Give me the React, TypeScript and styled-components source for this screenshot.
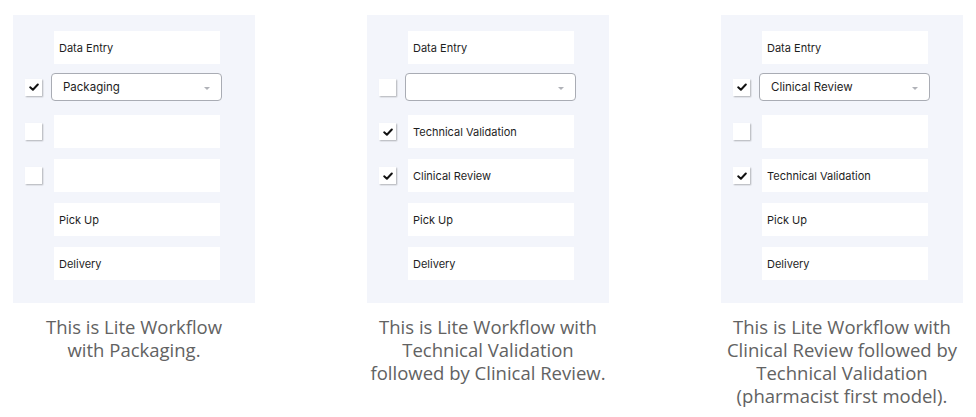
import React, { FC } from 'react';
import styled, { createGlobalStyle } from 'styled-components';

const GlobalStyle = createGlobalStyle`
  body {
    margin: 0;
    background: #ffffff;
  }
`;

type Step =
  | { kind: 'fixed'; label: string }
  | { kind: 'select'; label: string; checked: boolean }
  | { kind: 'option'; label: string; checked: boolean };

interface Workflow {
  steps: Step[];
  caption: string[];
}

const workflows: Workflow[] = [
  {
    steps: [
      { kind: 'fixed', label: 'Data Entry' },
      { kind: 'select', label: 'Packaging', checked: true },
      { kind: 'option', label: '', checked: false },
      { kind: 'option', label: '', checked: false },
      { kind: 'fixed', label: 'Pick Up' },
      { kind: 'fixed', label: 'Delivery' },
    ],
    caption: ['This is Lite Workflow', 'with Packaging.'],
  },
  {
    steps: [
      { kind: 'fixed', label: 'Data Entry' },
      { kind: 'select', label: '', checked: false },
      { kind: 'option', label: 'Technical Validation', checked: true },
      { kind: 'option', label: 'Clinical Review', checked: true },
      { kind: 'fixed', label: 'Pick Up' },
      { kind: 'fixed', label: 'Delivery' },
    ],
    caption: [
      'This is Lite Workflow with',
      'Technical Validation',
      'followed by Clinical Review.',
    ],
  },
  {
    steps: [
      { kind: 'fixed', label: 'Data Entry' },
      { kind: 'select', label: 'Clinical Review', checked: true },
      { kind: 'option', label: '', checked: false },
      { kind: 'option', label: 'Technical Validation', checked: true },
      { kind: 'fixed', label: 'Pick Up' },
      { kind: 'fixed', label: 'Delivery' },
    ],
    caption: [
      'This is Lite Workflow with',
      'Clinical Review followed by',
      'Technical Validation',
      '(pharmacist first model).',
    ],
  },
];

const CheckMark: FC = () => (
  <svg width="10" height="8" viewBox="0 0 10 8" aria-hidden>
    <path
      d="M1.2 4.3 L3.9 6.7 L8.8 1.5"
      fill="none"
      stroke="#111"
      strokeWidth="2"
      strokeLinecap="round"
      strokeLinejoin="round"
    />
  </svg>
);

const StepRow: FC<{ step: Step }> = ({ step }) => {
  if (step.kind === 'fixed') {
    return (
      <Row>
        <CheckSlot />
        <Field>{step.label}</Field>
      </Row>
    );
  }
  if (step.kind === 'select') {
    return (
      <Row $compact>
        <CheckSlot>
          <Checkbox>{step.checked && <CheckMark />}</Checkbox>
        </CheckSlot>
        <Select>
          <span>{step.label}</span>
          <Caret />
        </Select>
      </Row>
    );
  }
  return (
    <Row>
      <CheckSlot>
        <Checkbox>{step.checked && <CheckMark />}</Checkbox>
      </CheckSlot>
      <Field>{step.label}</Field>
    </Row>
  );
};

export default function App() {
  return (
    <>
      <GlobalStyle />
      <Page>
        {workflows.map((wf, i) => (
          <Column key={i}>
            <Panel>
              {wf.steps.map((step, j) => (
                <StepRow key={j} step={step} />
              ))}
            </Panel>
            <Caption>
              {wf.caption.map((line, k) => (
                <CaptionLine key={k}>{line}</CaptionLine>
              ))}
            </Caption>
          </Column>
        ))}
      </Page>
    </>
  );
}

const Page = styled.div`
  display: grid;
  grid-template-columns: repeat(3, 242px);
  column-gap: 112px;
  padding: 15px 0 0 13px;
`;

const Column = styled.div`
  display: flex;
  flex-direction: column;
  align-items: center;
`;

const Panel = styled.div`
  box-sizing: border-box;
  width: 100%;
  height: 288px;
  background: #f3f5fb;
  padding: 16px 0 0 12px;
  display: flex;
  flex-direction: column;
  gap: 11px;
`;

const Row = styled.div<{ $compact?: boolean }>`
  display: flex;
  align-items: center;
  gap: 12px;
  height: ${({ $compact }) => ($compact ? '28px' : '33px')};
  margin: ${({ $compact }) => ($compact ? '-2px 0 3px' : '0')};
`;

const CheckSlot = styled.div`
  width: 17px;
  flex: none;
  display: flex;
  justify-content: center;
`;

const Checkbox = styled.div`
  width: 17px;
  height: 17px;
  background: #ffffff;
  box-shadow: 1px 1px 1.5px rgba(0, 0, 0, 0.28);
  display: flex;
  align-items: center;
  justify-content: center;
`;

const Field = styled.div`
  box-sizing: border-box;
  width: 166px;
  height: 33px;
  background: #ffffff;
  padding-left: 5px;
  display: flex;
  align-items: center;
  font-family: Inter, 'Liberation Sans', sans-serif;
  font-size: 11px;
  color: #1e1e1e;
`;

const Select = styled.div`
  box-sizing: border-box;
  width: 171px;
  height: 28px;
  margin-left: -3px;
  background: #ffffff;
  border: 1px solid #a9acb4;
  border-radius: 4px;
  padding: 0 11px 0 11px;
  display: flex;
  align-items: center;
  justify-content: space-between;
  font-family: Inter, 'Liberation Sans', sans-serif;
  font-size: 11.5px;
  color: #1e1e1e;
`;

const Caret = styled.span`
  width: 0;
  height: 0;
  margin-top: 3px;
  border-left: 3.5px solid transparent;
  border-right: 3.5px solid transparent;
  border-top: 3.5px solid #b0b2b8;
`;

const Caption = styled.div`
  margin-top: 12px;
  display: flex;
  flex-direction: column;
  align-items: center;
`;

const CaptionLine = styled.div`
  white-space: nowrap;
  font-family: 'Open Sans', 'Liberation Sans', sans-serif;
  font-size: 18.5px;
  line-height: 23px;
  color: #626262;
`;
